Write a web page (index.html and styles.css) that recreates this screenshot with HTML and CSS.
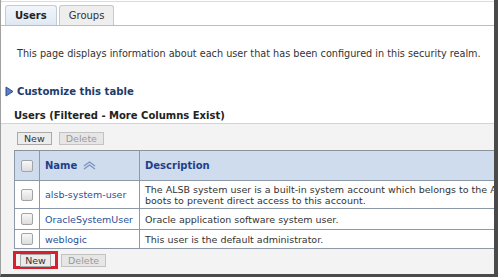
FILE: index.html
```html
<!DOCTYPE html>
<html>
<head>
<meta charset="utf-8">
<link rel="stylesheet" href="styles.css">
</head>
<body>
<div class="frame">
  <div class="topstrip"></div>
  <div class="tabbar">
    <div class="tab active">Users</div>
    <div class="tab">Groups</div>
  </div>
  <p class="intro">This page displays information about each user that has been configured in this security realm.</p>
  <div class="customize">
    <svg class="arrow" width="9" height="11" viewBox="0 0 9 11"><path d="M1 1 L8 5.5 L1 10 Z" fill="#5b7fc0" stroke="#2f4f8f" stroke-width="1"/></svg>
    <span>Customize this table</span>
  </div>
  <div class="heading">Users (Filtered - More Columns Exist)</div>
  <div class="panel">
    <div class="btnrow top">
      <span class="btn">New</span>
      <span class="btn disabled">Delete</span>
    </div>
    <table class="grid">
      <colgroup><col class="c1"><col class="c2"><col class="c3"></colgroup>
      <thead>
        <tr>
          <th><span class="cb"></span></th>
          <th class="name">Name <svg class="sort" width="13" height="9" viewBox="0 0 13 9"><path d="M1 5 L6.5 1 L12 5 M1 8 L6.5 4 L12 8" fill="none" stroke="#7c93bd" stroke-width="1.3"/></svg></th>
          <th>Description</th>
        </tr>
      </thead>
      <tbody>
        <tr class="tall">
          <td><span class="cb"></span></td>
          <td class="link">alsb-system-user</td>
          <td>The ALSB system user is a built-in system account which belongs to the ALSB Administrators group.<br>boots to prevent direct access to this account.</td>
        </tr>
        <tr class="mid">
          <td><span class="cb"></span></td>
          <td class="link">OracleSystemUser</td>
          <td>Oracle application software system user.</td>
        </tr>
        <tr class="last">
          <td><span class="cb"></span></td>
          <td class="link">weblogic</td>
          <td>This user is the default administrator.</td>
        </tr>
      </tbody>
    </table>
    <div class="btnrow bottom">
      <span class="highlight"><span class="btn">New</span></span>
      <span class="btn disabled">Delete</span>
    </div>
  </div>
</div>
</body>
</html>
```
FILE: styles.css
```css
html, body {
  margin: 0;
  padding: 0;
  background: #ffffff;
}
body {
  width: 500px;
  height: 279px;
  overflow: hidden;
  font-family: "DejaVu Sans", Verdana, sans-serif;
  color: #333333;
}
.frame {
  width: 493px;
  height: 274px;
  border-left: 1px solid #a0a0a0;
  border-right: 4px solid #4a4a4a;
  border-bottom: 3px solid #4a4a4a;
  overflow: hidden;
  background: #ffffff;
}
.topstrip {
  height: 1px;
  border-bottom: 1px solid #d8dce0;
}
.tabbar {
  display: flex;
  gap: 2px;
  padding: 3px 0 0 4px;
  border-bottom: 1px solid #b9bec4;
  height: 20px;
}
.tab {
  height: 19px;
  padding: 0 9px;
  display: flex;
  align-items: center;
  font-size: 10px;
  color: #333;
  background: #eeeeee;
  border: 1px solid #c8c8c8;
  border-bottom: none;
  border-radius: 3px 3px 0 0;
}
.tab.active {
  font-weight: bold;
  color: #222;
  background: linear-gradient(#f2f6fb, #dfe8f2);
  border-color: #c4ccd6;
}
.intro {
  margin: 0;
  padding: 21px 0 0 16px;
  height: 14px;
  line-height: 14px;
  font-size: 9.7px;
  color: #333;
}
.customize {
  display: flex;
  align-items: center;
  gap: 3px;
  margin-top: 23px;
  padding-left: 4px;
  height: 14px;
  font-size: 10.1px;
  font-weight: bold;
  color: #1e3b6a;
}
.heading {
  margin-top: 11px;
  padding-left: 13px;
  height: 14px;
  line-height: 14px;
  font-size: 10px;
  font-weight: bold;
  color: #222;
}
.panel {
  background: #f3f3f3;
  border-top: 1px solid #d4d4d4;
  height: 151px;
  padding-left: 13px;
}
.btnrow {
  display: flex;
  gap: 7px;
  align-items: center;
}
.btnrow.top {
  padding: 8px 0 5px 3px;
  height: 13px;
}
.btn {
  display: inline-flex;
  align-items: center;
  justify-content: center;
  box-sizing: border-box;
  height: 13px;
  padding: 0 6px;
  font-size: 9.5px;
  color: #333;
  background: #ececec;
  border: 1px solid #a9a9a9;
}
.btn.disabled {
  color: #9a9a9a;
  background: #e6e6e6;
  border-color: #c2c2c2;
}
.grid {
  border-collapse: collapse;
  width: 620px;
  table-layout: fixed;
  background: #ffffff;
  font-size: 9.5px;
}
.c1 { width: 25px; }
.c2 { width: 100px; }
.grid th, .grid td {
  border: 1px solid #8d99a6;
  padding: 0 5px;
  text-align: left;
  white-space: nowrap;
  overflow: hidden;
}
.grid th:first-child, .grid td:first-child {
  text-align: center;
  padding: 0;
}
.grid thead tr {
  height: 30px;
  background: #cedcee;
}
.grid thead tr th {
  border-top: 1px solid #8a929a;
}
.grid th {
  color: #1f3f8a;
  font-weight: bold;
  font-size: 10px;
}
.grid tbody tr.tall { height: 28px; }
.grid tbody tr.mid { height: 21px; }
.grid tbody tr.last { height: 19px; }
.grid td {
  color: #333;
  line-height: 11px;
}
.grid td.link {
  color: #2c4f98;
}
.sort {
  vertical-align: -1px;
  margin-left: 2px;
}
.cb {
  display: inline-block;
  width: 10px;
  height: 10px;
  border: 1px solid #a0a4a8;
  border-radius: 2px;
  background: linear-gradient(#f8f8f8, #dcdcdc);
  vertical-align: middle;
}
.btnrow.bottom {
  padding: 2px 0 0 0;
  margin-left: -1px;
  gap: 3px;
}
.highlight {
  display: inline-flex;
  align-items: center;
  justify-content: center;
  width: 39px;
  height: 12px;
  border: 3px solid #d42030;
  background: #f3f3f3;
}
.highlight .btn {
  padding: 0 4px;
}
```
